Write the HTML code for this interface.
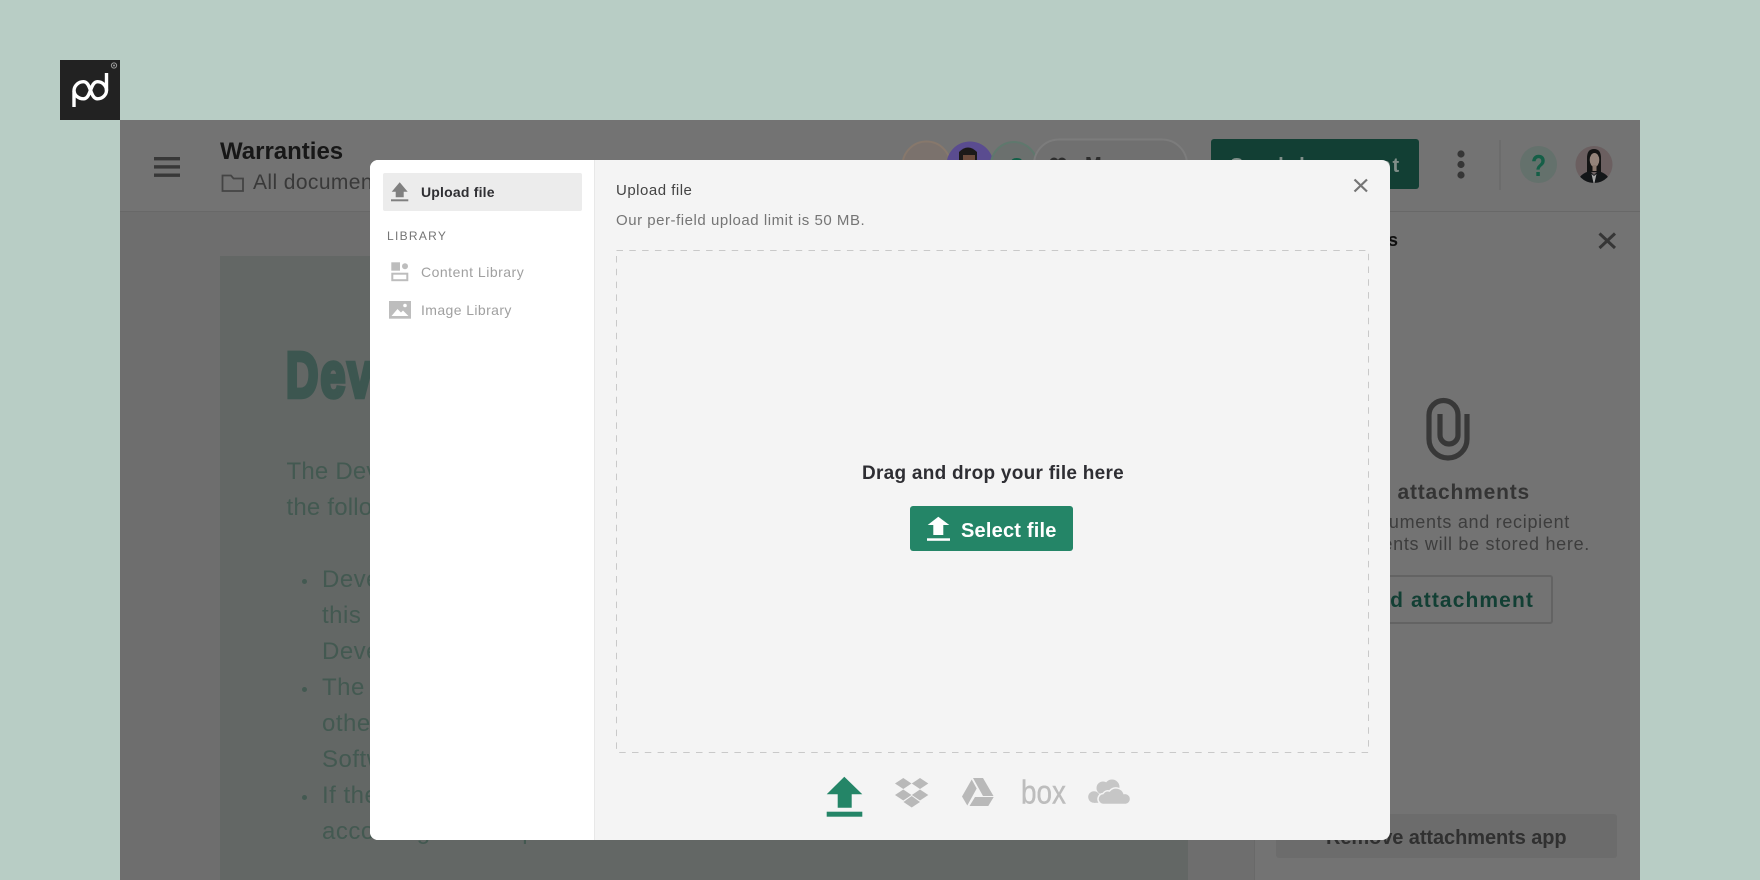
<!DOCTYPE html>
<html lang="en"><head><meta charset="utf-8"><title>Upload file</title>
<style>
html,body{margin:0;padding:0}
body{width:1760px;height:880px;position:relative;overflow:hidden;background:#b8cdc5;font-family:"Liberation Sans",sans-serif}
.a{position:absolute}
.t{position:absolute;white-space:nowrap}
.l{position:absolute;white-space:nowrap;left:322px;font-size:24px;line-height:36px;color:#435951;letter-spacing:.5px}
svg{position:absolute;overflow:visible}
</style></head><body>

<div class="a" style="left:60px;top:60px;width:60px;height:60px;background:#222"></div>
<svg style="left:0;top:0" width="1760" height="880" viewBox="0 0 1760 880">
<g fill="none" stroke="#fff" stroke-width="3.4">
<path d="M74 107V91A9.5 9.3 0 0 1 83.5 81.7C91 81.7 90 98.8 97.5 98.8A9 8.6 0 0 0 106.5 90.5V73"/>
<path d="M74 91A9.5 8.6 0 0 0 83.5 98.8C91 98.8 90 81.7 97.5 81.7A9 9 0 0 1 106.5 90.5"/>
</g>
<circle cx="114" cy="65.5" r="2.6" fill="none" stroke="#999" stroke-width="1"/>
<circle cx="114" cy="65.5" r="1" fill="#999"/>
</svg>

<!-- app -->
<div class="a" style="left:120px;top:120px;width:1520px;height:760px;background:#6e6e6e;overflow:hidden">
  <div class="a" style="left:0;top:0;width:1520px;height:91px;background:#737373;border-bottom:1px solid #686868"></div>
  <div class="a" style="left:100px;top:136px;width:968px;height:624px;background:#636765"></div>
  <div class="a" style="left:1134px;top:92px;width:386px;height:668px;background:#737373;border-left:1px solid #696969"></div>
</div>

<!-- header -->
<svg style="left:0;top:0" width="1760" height="880">
<rect x="154" y="157" width="26" height="3.4" fill="#383838"/>
<rect x="154" y="165.200" width="26" height="3.4" fill="#383838"/>
<rect x="154" y="173.500" width="26" height="3.4" fill="#383838"/>
<path d="M222.5 191V175.5H231L233.500 178.500H243V191Z" fill="none" stroke="#444" stroke-width="1.800"/>
</svg>
<div class="t" style="left:220px;top:138px;font-size:24px;line-height:28px;font-weight:bold;color:#171717">Warranties</div>
<div class="t" style="left:253px;top:171px;font-size:21px;line-height:24px;color:#393939;letter-spacing:.4px">All documents</div>

<svg style="left:0;top:0" width="1760" height="880">
<circle cx="926.500" cy="165.500" r="24" fill="#7b726d" stroke="#87786c" stroke-width="2"/>
<circle cx="970" cy="165" r="23.500" fill="#5a4c90"/>
<path d="M959 162V152Q968 143 977 152V162Z" fill="#1c1919"/>
<rect x="963" y="155" width="12" height="8" fill="#6b4a3c"/>
<circle cx="1014" cy="165" r="23" fill="#6b706e" stroke="#5f786d" stroke-width="2"/>
<rect x="1034" y="139.500" width="153" height="50" rx="25" fill="#707070" stroke="#7c7c7c" stroke-width="2"/>
<circle cx="1054" cy="162" r="4.500" fill="#2e2e2e"/><circle cx="1062" cy="162" r="4.500" fill="#2e2e2e"/>
</svg>
<div class="t" style="left:1010px;top:154px;font-size:20px;line-height:24px;font-weight:bold;color:#125f47">S</div>
<div class="t" style="left:1085px;top:153px;font-size:20px;line-height:24px;font-weight:bold;color:#2e2e2e">Manage</div>
<div class="a" style="left:1211px;top:139px;width:208px;height:50px;background:#123f34;border-radius:3px"></div>
<div class="t" style="left:1230px;top:154px;font-size:20px;line-height:24px;font-weight:bold;color:#808e89;letter-spacing:1.600px">Send document</div>
<svg style="left:0;top:0" width="1760" height="880">
<circle cx="1461" cy="154" r="3.600" fill="#363636"/><circle cx="1461" cy="164.500" r="3.600" fill="#363636"/><circle cx="1461" cy="175" r="3.600" fill="#363636"/>
<rect x="1499.500" y="140" width="1" height="50" fill="#666"/>
<circle cx="1538.500" cy="164.500" r="18.500" fill="#64716c"/>
</svg>
<div class="t" style="left:1531px;top:150px;font-size:31px;line-height:32px;font-weight:bold;color:#155f47;transform:scaleX(.8);transform-origin:0 0">?</div>
<svg style="left:0;top:0" width="1760" height="880">
<defs><clipPath id="av"><circle cx="1594" cy="164.500" r="18.500"/></clipPath></defs>
<g clip-path="url(#av)">
<rect x="1575" y="146" width="38" height="37" fill="#6b5f60"/>
<path d="M1587 172V158Q1587 149 1594 149Q1601 149 1601 158V172Z" fill="#141414"/>
<ellipse cx="1594.500" cy="160" rx="4.800" ry="7" fill="#94837a"/>
<rect x="1592.500" y="165" width="4" height="6" fill="#8a786e"/>
<path d="M1577 185Q1578 174 1590 171L1594 175L1598 171Q1610 174 1611 185Z" fill="#131618"/>
<path d="M1591.500 174L1594 185L1596.500 174L1594 176Z" fill="#a6a6a6"/>
</g>
</svg>

<!-- document -->
<div class="t" style="left:286px;top:333px;font-size:64px;line-height:84px;font-weight:bold;color:#3c5650;-webkit-text-stroke:4.500px #3c5650;transform:scaleX(.7);transform-origin:0 0;letter-spacing:3px">Developer</div>
<div class="t" style="left:286.500px;top:454px;font-size:24px;line-height:36px;color:#435951;letter-spacing:.2px">The Developer</div>
<div class="t" style="left:286.500px;top:490px;font-size:24px;line-height:36px;color:#435951;letter-spacing:.2px">the following</div>
<div class="a" style="left:302px;top:579px;width:5px;height:5px;border-radius:50%;background:#435951"></div>
<div class="a" style="left:302px;top:687px;width:5px;height:5px;border-radius:50%;background:#435951"></div>
<div class="a" style="left:302px;top:795px;width:5px;height:5px;border-radius:50%;background:#435951"></div>
<div class="l" style="top:562px">Developer</div>
<div class="l" style="top:598px">this&nbsp;&nbsp;warranty</div>
<div class="l" style="top:634px">Developer</div>
<div class="l" style="top:670px">The&nbsp;&nbsp;warranty</div>
<div class="l" style="top:706px">other</div>
<div class="l" style="top:742px">Software</div>
<div class="l" style="top:778px">If the</div>
<div class="l" style="top:814px">according to their p</div>

<!-- right panel -->
<div class="t" style="right:362px;top:229px;font-size:18px;line-height:22px;font-weight:bold;color:#0f0f0f">Attachments</div>
<svg style="left:0;top:0" width="1760" height="880">
<path d="M1599.500 233.500L1615 248M1615 233.500L1599.500 248" fill="none" stroke="#363636" stroke-width="3"/>
<path d="M1467 414V439A19 19 0 0 1 1429 439V415A14.500 14.500 0 0 1 1458 415V435A9 9 0 0 1 1440 435V414" fill="none" stroke="#383838" stroke-width="5.200"/>
</svg>
<div class="t" style="right:230px;top:480px;font-size:21px;line-height:26px;font-weight:bold;color:#343434;letter-spacing:.8px">No attachments</div>
<div class="t" style="right:190px;top:511px;font-size:18px;line-height:22px;color:#3d3d3d;letter-spacing:.7px">Documents and recipient</div>
<div class="t" style="right:170px;top:533px;font-size:18px;line-height:22px;color:#3d3d3d;letter-spacing:.7px">attachments will be stored here.</div>
<div class="a" style="left:1300px;top:575px;width:249px;height:45px;border:2px solid #636363;border-radius:3px"></div>
<div class="t" style="right:226px;top:588px;font-size:21px;line-height:26px;font-weight:bold;color:#123f34;letter-spacing:1.100px">Add attachment</div>
<div class="a" style="left:1276px;top:814px;width:341px;height:44px;background:#6c6c6c;border-radius:3px"></div>
<div class="t" style="left:1326px;top:826px;font-size:20px;line-height:24px;font-weight:bold;color:#303030;letter-spacing:-.08px">Remove attachments app</div>

<!-- modal -->
<div class="a" style="left:370px;top:160px;width:1020px;height:680px;background:#f4f4f4;border-radius:8px;overflow:hidden">
  <div class="a" style="left:0;top:0;width:224px;height:680px;background:#fff;border-right:1px solid #e8e8e8"></div>
  <div class="a" style="left:13px;top:13px;width:199px;height:38px;background:#ececec;border-radius:2px"></div>
</div>
<div class="t" style="left:421px;top:182px;font-size:14px;line-height:20px;font-weight:bold;color:#2f2f33;letter-spacing:.2px">Upload file</div>
<div class="t" style="left:387px;top:226px;font-size:12px;line-height:20px;color:#757575;letter-spacing:1.300px">LIBRARY</div>
<div class="t" style="left:421px;top:262px;font-size:14px;line-height:20px;color:#a0a0a0;letter-spacing:.5px">Content Library</div>
<div class="t" style="left:421px;top:300px;font-size:14px;line-height:20px;color:#a0a0a0;letter-spacing:.4px">Image Library</div>
<div class="t" style="left:616px;top:181px;font-size:15px;line-height:20px;color:#444;letter-spacing:.5px">Upload file</div>
<div class="t" style="left:616px;top:211px;font-size:15px;line-height:20px;color:#757575;letter-spacing:.53px">Our per-field upload limit is 50 MB.</div>
<div class="t" style="left:862px;top:462px;font-size:19px;line-height:24px;font-weight:bold;color:#2e2e33;letter-spacing:.27px">Drag and drop your file here</div>
<div class="a" style="left:910px;top:506px;width:163px;height:45px;background:#248567;border-radius:3px"></div>
<div class="t" style="left:961px;top:519px;font-size:20px;line-height:24px;font-weight:bold;color:#fff;letter-spacing:.2px">Select file</div>

<svg style="left:0;top:0" width="1760" height="880">
<!-- sidebar upload -->
<path d="M399.700 182.300L407.700 191.700H403.700V197.300H395.700V191.700H391.700Z" fill="#808080"/>
<rect x="391" y="199.300" width="17.300" height="2" fill="#808080"/>
<!-- content library -->
<rect x="391.300" y="262.300" width="8.700" height="8.400" fill="#bdbdbd"/>
<circle cx="405" cy="266.300" r="3" fill="#bdbdbd"/>
<rect x="392.300" y="273.700" width="15" height="6.500" fill="none" stroke="#bdbdbd" stroke-width="2"/>
<!-- image library -->
<rect x="389" y="301" width="22" height="17.700" fill="#bdbdbd"/>
<path d="M391.500 316L397.500 309L401 312.500L403 310.500L408.500 316Z" fill="#fff"/>
<circle cx="405" cy="305.500" r="1.800" fill="#fff"/>
<!-- close -->
<path d="M1354.500 179.500L1367 191.500M1367 179.500L1354.500 191.500" fill="none" stroke="#757575" stroke-width="2.200"/>
<!-- dashed -->
<rect x="616.500" y="250.500" width="752" height="502" fill="none" stroke="#c9c9c9" stroke-width="1" stroke-dasharray="6.500 6.300"/>
<!-- select icon -->
<path d="M938.300 516.700L949.300 525H943.300V535H933.300V525H927.700Z" fill="#fff"/>
<rect x="927" y="538.300" width="23" height="2.500" fill="#fff"/>
<!-- bottom upload -->
<path d="M844.300 776.700L862.300 794.300H851.700V807.700H837.700V794.300H826.700Z" fill="#248567"/>
<rect x="826.700" y="811.700" width="35.600" height="5" fill="#248567"/>
<!-- dropbox -->
<g fill="#b9b9b9">
<path d="M903.300 778L911.500 783.500L903.300 789L895 783.500Z"/>
<path d="M920 778L928.300 783.500L920 789L911.800 783.500Z"/>
<path d="M903.300 789.500L911.500 795L903.300 800.500L895 795Z"/>
<path d="M920 789.500L928.300 795L920 800.500L911.800 795Z"/>
<path d="M911.700 796L920 802L911.700 807.500L903.500 802Z"/>
<!-- drive -->
<path d="M973 778H983L993.500 796H983Z"/>
<path d="M971.700 779.500L976.700 788.500L967.300 805.500L962 796.500Z"/>
<path d="M969.500 806L975 797H993.700L988.300 806Z"/>
</g>
<!-- box -->
<text x="1021" y="803.500" font-family="Liberation Sans" font-size="33" fill="#bdbdbd" stroke="#bdbdbd" stroke-width=".4" textLength="45" lengthAdjust="spacingAndGlyphs">box</text>
<!-- cloud -->
<g fill="#c6c6c6" transform="translate(1 0)">
<circle cx="1093" cy="797" r="5.800"/>
<circle cx="1102" cy="788" r="6.500"/>
<circle cx="1111" cy="787" r="7.500"/>
<rect x="1093" y="795" width="25" height="7.800"/>
</g>
<path d="M1103 804.500A5.500 5.500 0 0 1 1102 793.500A6 6 0 0 1 1108.500 791A8.500 8.500 0 0 1 1123 793.500A5.500 5.500 0 0 1 1125 804.500Z" fill="#c6c6c6" stroke="#f4f4f4" stroke-width="1.500" transform="translate(1 0)"/>
</svg>

</body></html>
